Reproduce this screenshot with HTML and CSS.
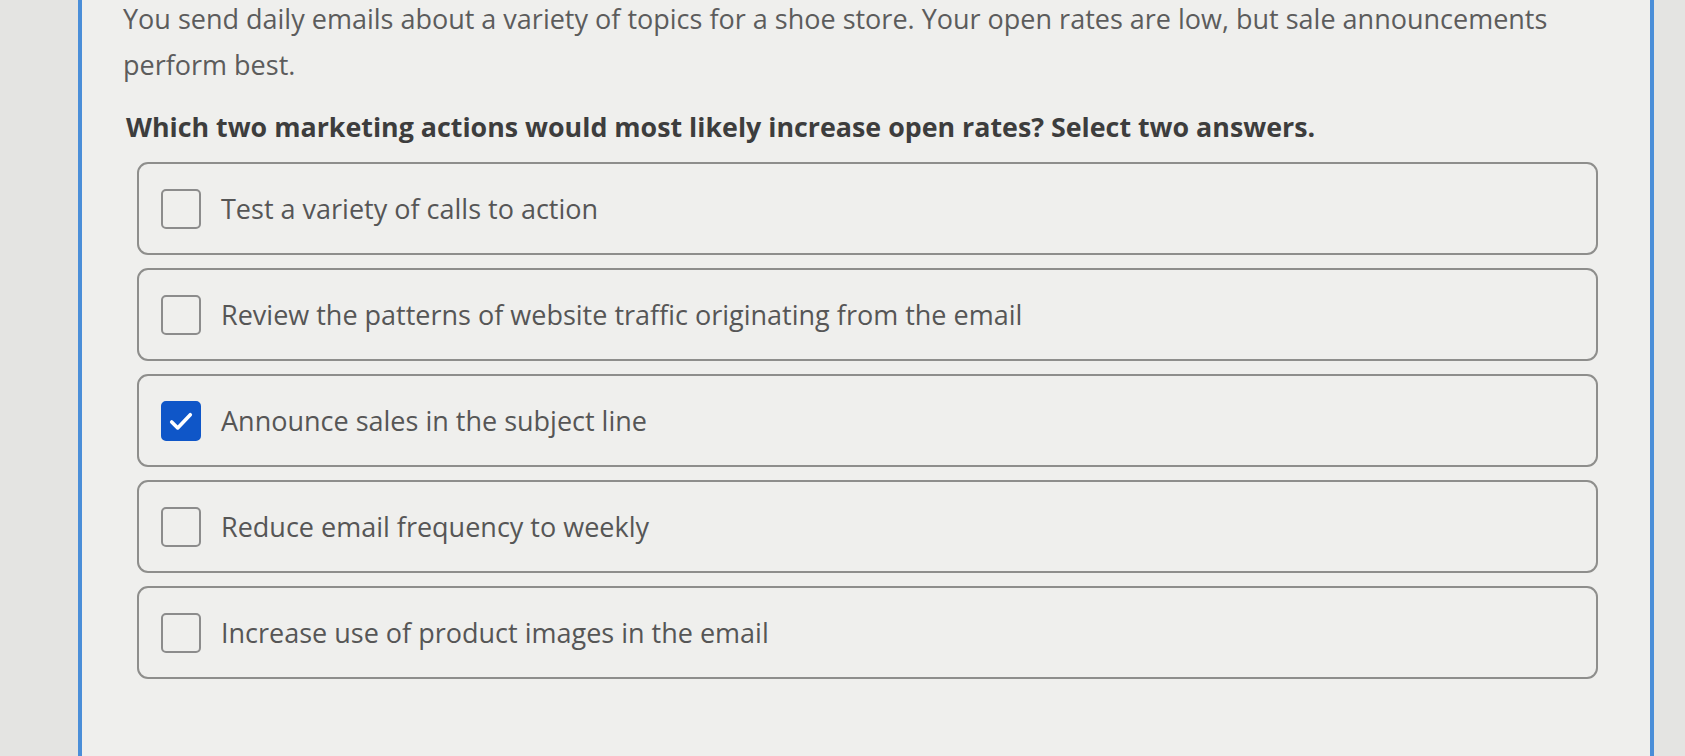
FILE: index.html
```html
<!DOCTYPE html>
<html>
<head>
<meta charset="utf-8">
<link rel="stylesheet" href="styles.css">
</head>
<body>
<div class="screen">
  <div class="gutter-left"></div>
  <main class="panel">
    <p class="intro">You send daily emails about a variety of topics for a shoe store. Your open rates are low, but sale announcements perform best.</p>
    <p class="question">Which two marketing actions would most likely increase open rates? Select two answers.</p>
    <div class="options">
      <label class="option"><span class="box"></span><span class="label">Test a variety of calls to action</span></label>
      <label class="option"><span class="box"></span><span class="label">Review the patterns of website traffic originating from the email</span></label>
      <label class="option"><span class="box checked"><svg viewBox="0 0 24 24" width="38" height="38"><path d="M5.8 12.6l4 4L18.2 7.8" fill="none" stroke="#fff" stroke-width="2.4" stroke-linecap="round" stroke-linejoin="round"/></svg></span><span class="label">Announce sales in the subject line</span></label>
      <label class="option"><span class="box"></span><span class="label">Reduce email frequency to weekly</span></label>
      <label class="option"><span class="box"></span><span class="label">Increase use of product images in the email</span></label>
    </div>
  </main>
  <div class="gutter-right"></div>
</div>
</body>
</html>
```

FILE: styles.css
```css
html, body {
  margin: 0;
  padding: 0;
  height: 100%;
  background: #e7e7e5;
  font-family: "Open Sans", "DejaVu Sans", sans-serif;
  overflow: hidden;
}

.screen {
  display: flex;
  height: 756px;
}

.gutter-left {
  width: 78px;
  flex: none;
  background: #e4e4e2;
}

.gutter-right {
  width: 31px;
  flex: none;
  background: #e4e4e2;
}

.panel {
  flex: 1;
  background: #efefed;
  border-left: 4px solid #4a8ed8;
  border-right: 4px solid #4a8ed8;
  padding: 0 52px 0 41px;
  box-sizing: border-box;
}

.intro {
  margin: -4px 0 0 0;
  font-size: 27px;
  line-height: 46px;
  color: #5c5c5c;
}

.question {
  margin: 21px 0 0 3px;
  font-size: 26.8px;
  line-height: 36px;
  font-weight: 700;
  color: #3d3d3d;
}

.options {
  display: flex;
  flex-direction: column;
  gap: 13px;
  margin-top: 17px;
  margin-left: 14px;
}

.option {
  display: flex;
  align-items: center;
  gap: 20px;
  height: 93px;
  box-sizing: border-box;
  padding: 0 0 0 22px;
  border: 2px solid #8e8e8c;
  border-radius: 11px;
}

.box {
  width: 40px;
  height: 40px;
  flex: none;
  box-sizing: border-box;
  border: 2px solid #8c8c8c;
  border-radius: 5px;
  display: flex;
  align-items: center;
  justify-content: center;
}

.box.checked {
  background: #0f56c8;
  border-color: #0f56c8;
}

.label {
  font-size: 27px;
  color: #565656;
}
```
